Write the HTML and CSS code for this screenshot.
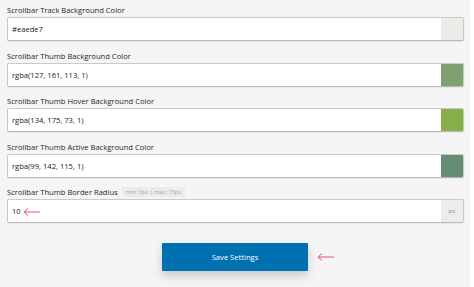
FILE: index.html
```html
<!DOCTYPE html>
<html lang="en">
<head>
    <meta charset="UTF-8">
    <meta name="viewport" content="width=device-width, initial-scale=1.0">
    <title>Scrollbar Settings</title>
    <link rel="stylesheet" href="styles.css">
</head>
<body>
    <div class="panel">
        <form class="settings">
            <div class="field">
                <label>Scrollbar Track Background Color</label>
                <div class="input-row">
                    <input type="text" value="#eaede7">
                    <span class="swatch" style="background: #eaede7"></span>
                </div>
            </div>
            <div class="field">
                <label>Scrollbar Thumb Background Color</label>
                <div class="input-row">
                    <input type="text" value="rgba(127, 161, 113, 1)">
                    <span class="swatch" style="background: rgba(127, 161, 113, 1)"></span>
                </div>
            </div>
            <div class="field">
                <label>Scrollbar Thumb Hover Background Color</label>
                <div class="input-row">
                    <input type="text" value="rgba(134, 175, 73, 1)">
                    <span class="swatch" style="background: rgba(134, 175, 73, 1)"></span>
                </div>
            </div>
            <div class="field">
                <label>Scrollbar Thumb Active Background Color</label>
                <div class="input-row">
                    <input type="text" value="rgba(99, 142, 115, 1)">
                    <span class="swatch" style="background: rgba(99, 142, 115, 1)"></span>
                </div>
            </div>
            <div class="field">
                <label>Scrollbar Thumb Border Radius<span class="hint">min: 0px | max: 15px</span></label>
                <div class="input-row">
                    <input type="text" value="10">
                    <svg class="pointer pointer-input" width="18" height="8" viewBox="0 0 18 8"><path d="M17 4H1M5 0.5L1 4l4 3.5" fill="none" stroke="#de4f84" stroke-width="1"/></svg>
                    <span class="addon">px</span>
                </div>
            </div>
            <div class="actions">
                <button type="button" class="save">Save Settings</button>
                <svg class="pointer pointer-button" width="18" height="8" viewBox="0 0 18 8"><path d="M17 4H1M5 0.5L1 4l4 3.5" fill="none" stroke="#de4f84" stroke-width="1"/></svg>
            </div>
        </form>
    </div>
</body>
</html>
```

FILE: styles.css
```css
body {
    margin: 0;
    padding: 0;
    background-color: #fff;
    font-family: 'Open Sans', 'Noto Sans', sans-serif;
    color: #222;
}
.panel {
    width: 470px;
    height: 287px;
    background-color: #f5f5f5;
    box-sizing: border-box;
    padding: 3px 0 0 7px;
}
.settings {
    width: 457px;
}
.field {
    margin-bottom: 7.5px;
}
.field label {
    display: block;
    height: 14px;
    line-height: 14px;
    font-size: 7.6px;
    color: #1f1f1f;
}
.hint {
    display: inline-block;
    margin-left: 4px;
    padding: 0 4px;
    height: 10px;
    line-height: 10px;
    font-size: 5.6px;
    color: #a5a5a5;
    background-color: #ebebeb;
    vertical-align: 1px;
}
.input-row {
    position: relative;
    display: flex;
    height: 24px;
    box-sizing: border-box;
    border: 1px solid #c9c9c9;
    border-bottom-color: #b8b8b8;
    border-radius: 2px;
    background-color: #fff;
    box-shadow: 0 1px 1px rgba(0,0,0,0.06);
    overflow: hidden;
}
.input-row input {
    flex: 1;
    min-width: 0;
    border: none;
    outline: none;
    padding: 0 4px;
    font-family: inherit;
    font-size: 7.6px;
    color: #222;
    background: transparent;
}
.swatch {
    width: 22px;
    flex: none;
}
.addon {
    width: 22px;
    flex: none;
    background-color: #ececec;
    color: #888;
    font-size: 6px;
    text-align: center;
    line-height: 22px;
}
.pointer {
    position: absolute;
}
.pointer-input {
    left: 15px;
    top: 8px;
}
.actions {
    position: relative;
    display: flex;
    justify-content: center;
    margin-top: 20px;
    padding-right: 1px;
}
.save {
    width: 146px;
    height: 28px;
    border: none;
    border-radius: 1px;
    background-color: #0071b0;
    color: #fff;
    font-family: inherit;
    font-size: 7.6px;
    box-shadow: 0 5px 10px rgba(0,0,0,0.18);
}
.pointer-button {
    left: 310px;
    top: 10px;
}
```
